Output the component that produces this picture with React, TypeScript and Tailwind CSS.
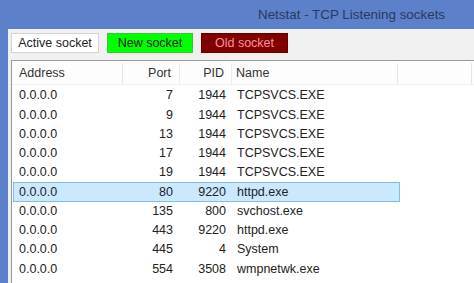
import React from "react";

const rows = [
  ["0.0.0.0", "7", "1944", "TCPSVCS.EXE"],
  ["0.0.0.0", "9", "1944", "TCPSVCS.EXE"],
  ["0.0.0.0", "13", "1944", "TCPSVCS.EXE"],
  ["0.0.0.0", "17", "1944", "TCPSVCS.EXE"],
  ["0.0.0.0", "19", "1944", "TCPSVCS.EXE"],
  ["0.0.0.0", "80", "9220", "httpd.exe"],
  ["0.0.0.0", "135", "800", "svchost.exe"],
  ["0.0.0.0", "443", "9220", "httpd.exe"],
  ["0.0.0.0", "445", "4", "System"],
  ["0.0.0.0", "554", "3508", "wmpnetwk.exe"],
  ["0.0.0.0", "2869", "4", "System"],
];

export default function App() {
  return (
    <div
      className="w-[474px] h-[283px] overflow-hidden bg-[#5c80c9] flex flex-col"
      style={{ fontFamily: '"Liberation Sans", Arial, sans-serif' }}
    >
      <div className="h-[29px] shrink-0 flex items-center pl-[258px] pt-[2px] text-[13.4px] text-[#2a3a5e]">
        Netstat - TCP Listening sockets
      </div>
      <div className="flex-1 ml-[8px] bg-[#f0f0f0] flex flex-col min-h-0">
        <div className="h-[31px] shrink-0 flex items-start pl-[3px] pt-[4px] gap-[8px] text-[12.5px]">
          <div className="w-[88px] h-[20px] bg-white border border-[#d4d4d4] flex items-center justify-center text-[#222]">
            Active socket
          </div>
          <div className="w-[86px] h-[20px] bg-[#00ff00] border border-[#33cc33] flex items-center justify-center text-[#1a1a1a]">
            New socket
          </div>
          <div className="w-[87px] h-[20px] bg-[#800000] border border-[#660000] flex items-center justify-center text-[#ff9090]">
            Old socket
          </div>
        </div>
        <div className="flex-1 ml-[3px] bg-white border-l border-t border-[#9a9a9a] flex flex-col min-h-0 text-[12.5px] text-[#222]">
          <div className="h-[24px] shrink-0 flex items-center pt-[2px] text-[#333] bg-[#fdfdfd] border-b border-[#f0f0f0]">
            <div className="w-[111px] pl-[7px] h-full flex items-center border-r border-[#e5e5e5]">Address</div>
            <div className="w-[57px] pr-[8px] h-full flex items-center justify-end border-r border-[#ececec]">Port</div>
            <div className="w-[52px] pr-[7px] h-full flex items-center justify-end border-r border-[#ececec]">PID</div>
            <div className="w-[166px] pl-[4px] h-full flex items-center border-r border-[#e5e5e5]">Name</div>
            <div className="w-[74px] h-full border-r border-[#e5e5e5]" />
          </div>
          <div className="h-[1px] shrink-0" />
          {rows.map((r, i) => {
            const sel = i === 5;
            return (
              <div
                key={i}
                className={
                  "h-[19.25px] shrink-0 flex items-center w-[387px] ml-[1px] " +
                  (sel ? "bg-[#cce8ff] border border-[#7fbfe8]" : "border border-transparent")
                }
              >
                <div className="w-[110px] pl-[5px]">{r[0]}</div>
                <div className="w-[57px] pr-[8px] text-right">{r[1]}</div>
                <div className="w-[52px] pr-[7px] text-right">{r[2]}</div>
                <div className="pl-[4px]">{r[3]}</div>
              </div>
            );
          })}
        </div>
      </div>
    </div>
  );
}
